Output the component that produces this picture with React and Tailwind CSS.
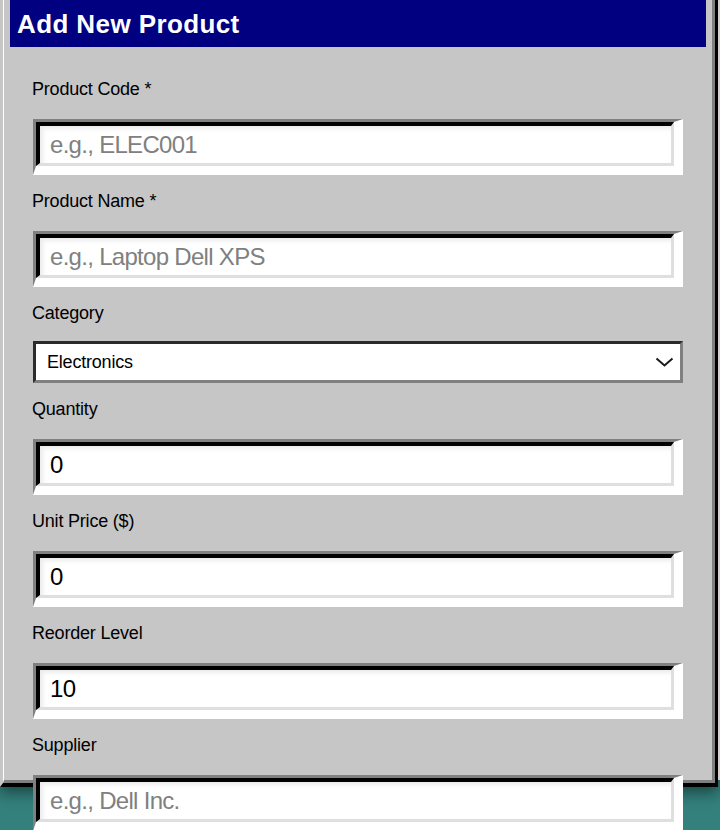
import React from "react";

const fields = [
  { label: "Product Code *", placeholder: "e.g., ELEC001" },
  { label: "Product Name *", placeholder: "e.g., Laptop Dell XPS" },
  { label: "Category", select: "Electronics" },
  { label: "Quantity", value: "0" },
  { label: "Unit Price ($)", value: "0" },
  { label: "Reorder Level", value: "10" },
  { label: "Supplier", placeholder: "e.g., Dell Inc." },
];

function TextBox({ value, placeholder }) {
  return (
    <div className="border-t-[3px] border-l-[3px] border-b-[9px] border-r-[9px] border-t-[#808080] border-l-[#808080] border-b-white border-r-white">
      <div className="border-t-4 border-l-4 border-b-[3px] border-r-[3px] border-t-black border-l-black border-b-[#dfdfdf] border-r-[#dfdfdf]">
        <div className="h-[37px] bg-white flex items-center pl-[10px] text-[24px] tracking-[-0.7px] shadow-[inset_3px_3px_4px_rgba(0,0,0,0.08)]">
          {value ? (
            <span className="text-black">{value}</span>
          ) : (
            <span className="text-[#808080]">{placeholder}</span>
          )}
        </div>
      </div>
    </div>
  );
}

function SelectBox({ value }) {
  return (
    <div className="h-[42px] bg-white border-t-[3px] border-l-[3px] border-b-[3px] border-r-[3px] border-t-[#2b2b2b] border-l-[#2b2b2b] border-b-[#808080] border-r-[#808080] flex items-center justify-between pl-[11px] pr-[6px]">
      <span className="text-[18px] tracking-[-0.2px] text-black">{value}</span>
      <svg width="19" height="10" viewBox="0 0 19 10" fill="none">
        <path d="M1.5 1.5 L9.5 8.5 L17.5 1.5" stroke="#1a1a1a" strokeWidth="2" />
      </svg>
    </div>
  );
}

export default function App() {
  return (
    <div
      className="w-[720px] h-[830px] overflow-hidden bg-[#33807c]"
      style={{ fontFamily: '"Liberation Sans", Arial, sans-serif' }}
    >
      <div className="flex h-[787px]">
        <div className="w-[718px] h-[787px] shrink-0 border-l-[3px] border-l-[#c6c6c6] border-r-[3px] border-r-black border-b-4 border-b-black shadow-[0_6px_14px_rgba(0,0,0,0.45)]">
          <div className="h-full bg-[#c6c6c6] border-l border-l-white border-r-[3px] border-r-[#808080] border-b-[3px] border-b-[#808080] px-[6px]">
            <div className="h-[47px] bg-[#000080] flex items-center pl-[7px] pt-[2px]">
              <h1 className="text-white font-bold text-[26px] tracking-[0.4px]">
                Add New Product
              </h1>
            </div>
            <div className="px-[23px] pt-[30px] flex flex-col gap-[14px]">
              {fields.map((f) => (
                <div key={f.label} className="flex flex-col">
                  <label className="h-[24px] leading-[24px] text-[18px] tracking-[-0.2px] text-black -ml-[1px]">
                    {f.label}
                  </label>
                  <div className={f.select ? "mt-[16px]" : "mt-[18px]"}>
                    {f.select ? (
                      <SelectBox value={f.select} />
                    ) : (
                      <TextBox value={f.value} placeholder={f.placeholder} />
                    )}
                  </div>
                </div>
              ))}
            </div>
          </div>
        </div>
        <div className="w-[2px] h-[780px] bg-[#d6cfcf]" />
      </div>
    </div>
  );
}
